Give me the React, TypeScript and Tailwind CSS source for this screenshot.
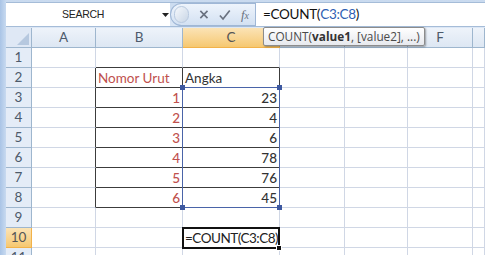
import React from "react";

const COLS = ["A", "B", "C", "D", "E", "F", ""];
const ROWS = [1, 2, 3, 4, 5, 6, 7, 8, 9, 10, 11];
const DATA: Record<number, [string, string]> = {
  3: ["1", "23"],
  4: ["2", "4"],
  5: ["3", "6"],
  6: ["4", "78"],
  7: ["5", "76"],
  8: ["6", "45"],
};

function cellBorder(row: number, col: number) {
  const inTable = (col === 1 || col === 2) && row >= 2 && row <= 8;
  if (inTable) return "border-r border-b border-[#3c3c3c]";
  if (col === 0 && row >= 2 && row <= 8) return "border-r border-b border-r-[#3c3c3c] border-b-[#d0d7e5]";
  if ((col === 1 || col === 2) && row === 1) return "border-r border-b border-r-[#d0d7e5] border-b-[#3c3c3c]";
  return "border-r border-b border-[#d0d7e5]";
}

function Cell({ row, col }: { row: number; col: number }) {
  const base = `relative flex items-center px-[2px] pt-[2px] text-[13.5px] leading-none whitespace-nowrap ${cellBorder(row, col)}`;
  if (row === 2 && col === 1) return <div className={`${base} text-[#c0504d]`}>Nomor Urut</div>;
  if (row === 2 && col === 2) return <div className={`${base} text-[#333]`}>Angka</div>;
  if (DATA[row] && col === 1)
    return <div className={`${base} justify-end font-medium text-[#c0504d]`}>{DATA[row][0]}</div>;
  if (DATA[row] && col === 2)
    return (
      <div className={`${base} justify-end font-medium text-[#333]`}>
        {DATA[row][1]}
        {row === 3 && (
          <div className="pointer-events-none absolute -left-px -top-px z-10 h-[121px] w-[98px] border border-[#4a64a8]">
            <span className="absolute -left-[3px] -top-[3px] h-[5px] w-[5px] bg-[#3d58a0]" />
            <span className="absolute -right-[3px] -top-[3px] h-[5px] w-[5px] bg-[#3d58a0]" />
            <span className="absolute -bottom-[3px] -left-[3px] h-[5px] w-[5px] bg-[#3d58a0]" />
            <span className="absolute -bottom-[3px] -right-[3px] h-[5px] w-[5px] bg-[#3d58a0]" />
          </div>
        )}
      </div>
    );
  if (row === 10 && col === 2)
    return (
      <div className={`${base} text-[12.5px] tracking-[-0.5px] text-[#222]`}>
        =COUNT(C3:C8)
        <div className="pointer-events-none absolute -left-px -top-px z-10 h-[22px] w-[98px] border-2 border-[#111]">
          <span className="absolute -bottom-[4px] -right-[4px] h-[6px] w-[6px] border border-white bg-[#111]" />
        </div>
      </div>
    );
  return <div className={base} />;
}

export default function App() {
  return (
    <div
      className="flex h-[255px] w-[485px] overflow-hidden bg-white"
      style={{ fontFamily: "Lato, 'Liberation Sans', sans-serif" }}
    >
      <div className="w-[6px] shrink-0 bg-gradient-to-r from-[#a9c4e6] to-[#c8daf0]" />
      <div className="flex min-w-0 flex-1 flex-col">
        {/* formula bar */}
        <div className="flex h-[28px] shrink-0 flex-col bg-gradient-to-b from-[#c9daef] to-[#dce7f5]">
          <div className="mt-[2px] flex h-[25px] items-stretch border-y border-[#a5bcd8]">
            <div
              className="flex w-[154px] items-center justify-center bg-white text-[10.5px] tracking-tight text-[#222]"
              style={{ fontFamily: "'Liberation Sans', sans-serif" }}
            >
              SEARCH
            </div>
            <div className="flex w-[10px] items-center justify-center bg-white">
              <svg width="7" height="4" viewBox="0 0 7 4"><path d="M0 0h7L3.5 4z" fill="#222" /></svg>
            </div>
            <div className="flex w-[86px] items-center gap-[10px] rounded-l-full rounded-r-[3px] border border-[#9fb7d6] bg-gradient-to-b from-[#eef4fc] to-[#d3e1f2] pl-[3px] pr-[6px]">
              <div className="h-[17px] w-[17px] rounded-full border border-[#b8c9df] bg-gradient-to-br from-[#f5f8fc] to-[#c9d6e6]" />
              <svg width="11" height="11" viewBox="0 0 11 11"><path d="M1.5 1.5l8 8M9.5 1.5l-8 8" stroke="#6a7280" strokeWidth="1.8" /></svg>
              <svg width="13" height="12" viewBox="0 0 13 12"><path d="M1 6.5l3.5 4L12 1" fill="none" stroke="#6a7280" strokeWidth="1.9" /></svg>
              <span className="text-[13px] italic text-[#6a7280]" style={{ fontFamily: "'Liberation Serif', serif" }}>
                f<span className="text-[10px]">x</span>
              </span>
            </div>
            <div className="flex flex-1 items-center bg-white pl-[7px] text-[13.5px] tracking-[-0.3px] text-[#111]">
              =COUNT(<span className="text-[#2f5fb3]">C3:C8</span>)
            </div>
          </div>
        </div>
        {/* sheet */}
        <div className="relative grid flex-1 grid-cols-[26px_64px_87px_97px_65px_63px_65px_1fr] grid-rows-[20px_repeat(11,20px)]">
          <div className="flex items-end justify-end border-r border-b border-[#9eb6ce] bg-[#dfe8f5] p-[2px]">
            <svg width="12" height="12" viewBox="0 0 12 12"><path d="M12 0v12H0z" fill="#b6c8df" /></svg>
          </div>
          {COLS.map((c, i) => (
            <div
              key={c + i}
              className={`flex items-center justify-center border-r border-b text-[13.5px] ${
                i === 2
                  ? "border-[#f2b24a] bg-gradient-to-b from-[#fbe3b5] to-[#f6c870] text-[#555]"
                  : "border-[#9eb6ce] bg-gradient-to-b from-[#eef3fa] to-[#dde7f3] text-[#4d5a6b]"
              }`}
            >
              {/* D and E sit under the function tooltip */}
              {i === 3 || i === 4 ? "" : c}
            </div>
          ))}
          {ROWS.map((r) => (
            <React.Fragment key={r}>
              <div
                className={`flex items-center justify-center border-r border-b text-[13.5px] ${
                  r === 10
                    ? "border-[#f2b24a] bg-gradient-to-b from-[#fbe3b5] to-[#f6c870] text-[#555]"
                    : "border-[#9eb6ce] bg-[#e4ecf7] text-[#4d5a6b]"
                }`}
              >
                {r}
              </div>
              {COLS.map((c, i) => (
                <Cell key={c + i} row={r} col={i} />
              ))}
            </React.Fragment>
          ))}
          {/* function tooltip */}
          <div
            className="absolute left-[257px] top-[-1px] z-20 flex h-[19px] items-center rounded-[2px] border border-[#8c8c8c] bg-gradient-to-b from-white to-[#e7e9ee] px-[4px] text-[11.8px] text-[#4a4a4a] shadow-[1px_1px_2px_rgba(0,0,0,0.35)]"
            style={{ fontFamily: "'Open Sans', 'Liberation Sans', sans-serif" }}
          >
            COUNT(<b className="text-[#333]">value1</b>, [value2], ...)
          </div>
        </div>
      </div>
    </div>
  );
}
